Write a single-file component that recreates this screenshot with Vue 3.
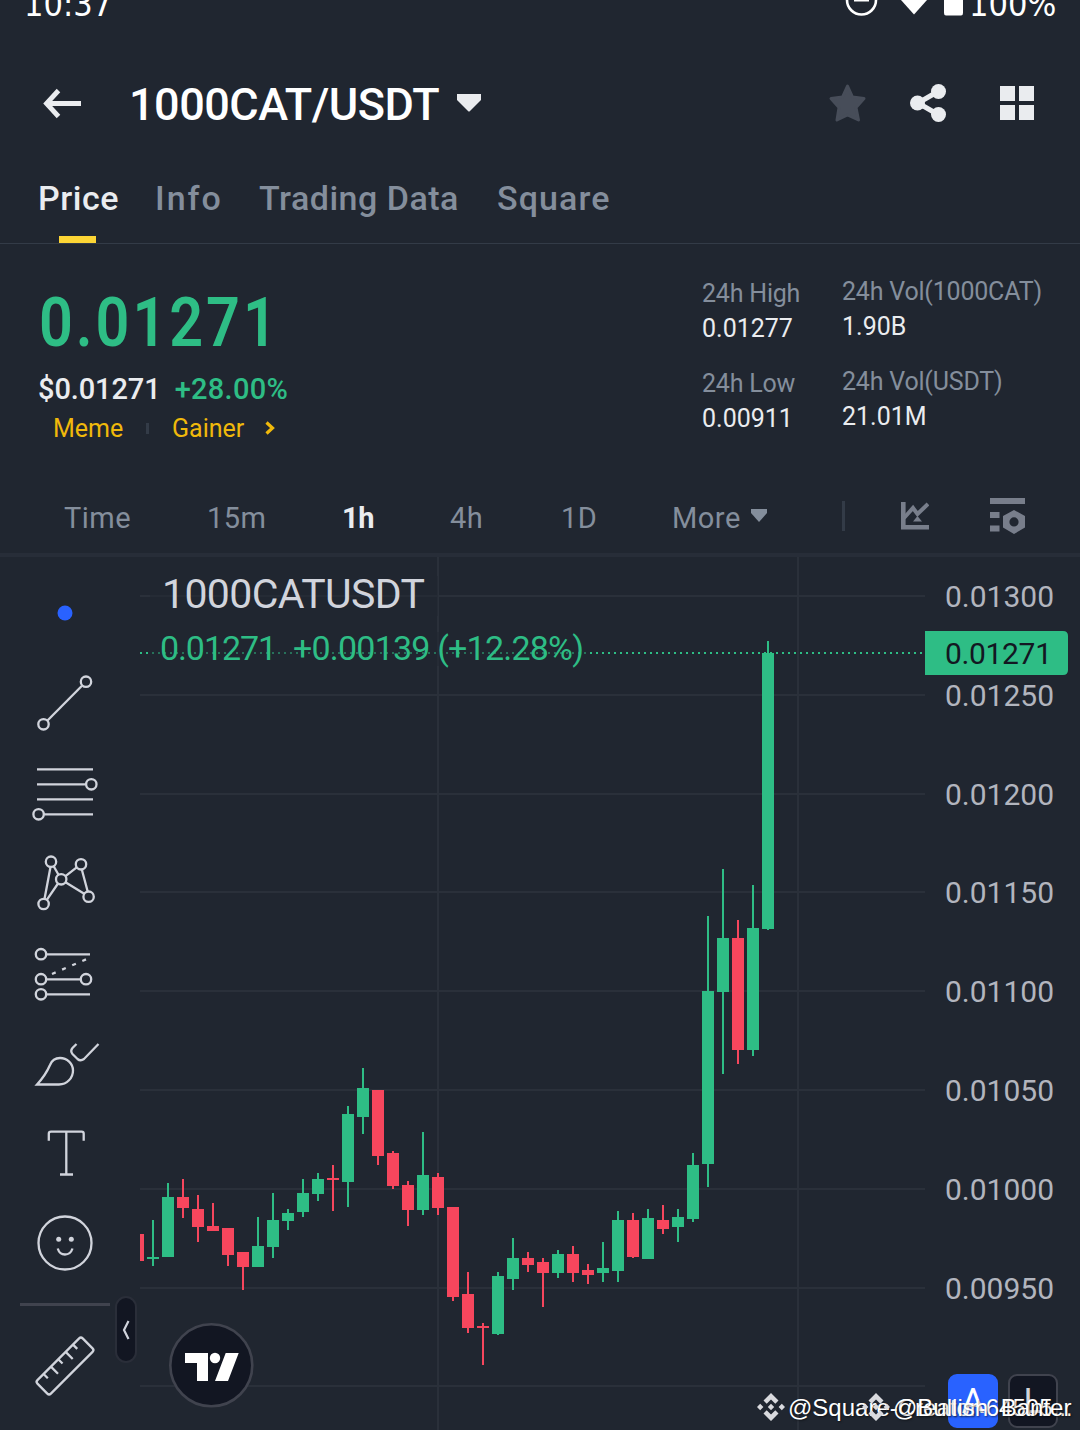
<script setup>
import { ref } from "vue";

const tabs = ['Price', 'Info', 'Trading Data', 'Square'];
const activeTab = ref('Price');

const intervals = ['Time', '15m', '1h', '4h', '1D'];
const activeInterval = ref('1h');

const stats = [
  [
    { label: '24h High', value: '0.01277' },
    { label: '24h Low', value: '0.00911' },
  ],
  [
    { label: '24h Vol(1000CAT)', value: '1.90B' },
    { label: '24h Vol(USDT)', value: '21.01M' },
  ],
];

const levels = [
  { y: 596, label: '0.01300' },
  { y: 695, label: '0.01250' },
  { y: 794, label: '0.01200' },
  { y: 892, label: '0.01150' },
  { y: 991, label: '0.01100' },
  { y: 1090, label: '0.01050' },
  { y: 1189, label: '0.01000' },
  { y: 1288, label: '0.00950' },
  { y: 1386, label: '' },
];

// direction, high, body top, body bottom, low
const rows = [
  ['down', 1234, 1234, 1261, 1261],
  ['up', 1220, 1257, 1259, 1266],
  ['up', 1183, 1197, 1257, 1257],
  ['down', 1179, 1197, 1208, 1218],
  ['down', 1195, 1209, 1227, 1242],
  ['down', 1203, 1226, 1231, 1231],
  ['down', 1228, 1228, 1255, 1266],
  ['down', 1252, 1252, 1267, 1290],
  ['up', 1217, 1246, 1267, 1267],
  ['up', 1193, 1220, 1247, 1258],
  ['up', 1209, 1213, 1221, 1230],
  ['up', 1179, 1193, 1212, 1217],
  ['up', 1173, 1179, 1194, 1201],
  ['down', 1165, 1178, 1180, 1211],
  ['up', 1106, 1114, 1182, 1207],
  ['up', 1068, 1088, 1117, 1134],
  ['down', 1090, 1090, 1156, 1165],
  ['down', 1151, 1153, 1186, 1189],
  ['down', 1181, 1185, 1210, 1226],
  ['up', 1132, 1175, 1210, 1215],
  ['down', 1173, 1177, 1208, 1215],
  ['down', 1207, 1207, 1297, 1301],
  ['down', 1272, 1294, 1328, 1333],
  ['down', 1323, 1326, 1328, 1365],
  ['up', 1272, 1276, 1334, 1335],
  ['up', 1238, 1258, 1279, 1290],
  ['down', 1252, 1258, 1265, 1272],
  ['down', 1258, 1262, 1273, 1307],
  ['up', 1250, 1254, 1273, 1278],
  ['down', 1246, 1254, 1273, 1282],
  ['down', 1264, 1270, 1275, 1284],
  ['up', 1242, 1268, 1273, 1282],
  ['up', 1211, 1220, 1271, 1282],
  ['down', 1213, 1220, 1257, 1258],
  ['up', 1209, 1218, 1259, 1259],
  ['down', 1205, 1220, 1229, 1234],
  ['up', 1209, 1217, 1227, 1242],
  ['up', 1153, 1165, 1219, 1222],
  ['up', 916, 991, 1164, 1187],
  ['up', 869, 938, 992, 1074],
  ['down', 920, 938, 1050, 1064],
  ['up', 885, 928, 1050, 1056],
  ['up', 641, 653, 929, 930],
];

const candles = rows.map(([dir, high, top, bottom, low], i) => ({
  x: 138 + i * 15,
  dir, high, top, bottom, low,
}));
</script>

<template>
<div class="screen">
  <div class="status">
    <span class="clock">10:37</span>
    <svg class="status-icons" width="122" height="18" viewBox="842 0 122 18">
      <circle cx="860.5" cy="0" r="14.5" fill="none" stroke="#fff" stroke-width="2.6" />
      <path d="M853 0H868" stroke="#fff" stroke-width="3" />
      <path d="M900 0H926L913 14.5Z" fill="#fff" />
      <path d="M943 0H962V13Q962 15.500 960 15.500H945Q943 15.500 943 13Z" fill="#fff" />
    </svg>
    <span class="battery">100%</span>
  </div>

  <header class="header">
    <svg class="back" width="48" height="48" viewBox="0 0 48 48">
      <path d="M20.500 10.500L8.500 23.500L20.500 36.500M10 23.500H43" fill="none" stroke="#eaecef" stroke-width="4.800" />
    </svg>
    <h1>1000CAT/USDT</h1>
    <svg class="caret" width="24" height="18" viewBox="0 0 24 18">
      <path d="M0 0H24V6L13 17Q12 18 11 17L0 6Z" fill="#eaecef" />
    </svg>
    <div class="actions">
      <svg width="40" height="40" viewBox="0 0 40 40">
        <path d="M20.500 3L25.500 14L37 15.500L29 24.500L31.500 37L20.500 32L10 37L12 24.500L4 15.500L15.500 14Z" fill="#474d59" stroke="#474d59" stroke-width="3" stroke-linejoin="round" />
      </svg>
      <svg width="40" height="40" viewBox="0 0 40 40">
        <path d="M30 8.500L10 20L30 31.500" fill="none" stroke="#eaecef" stroke-width="5" />
        <circle cx="30.500" cy="8.500" r="7.500" fill="#eaecef" />
        <circle cx="9.500" cy="20" r="7.500" fill="#eaecef" />
        <circle cx="30.500" cy="31.500" r="7.500" fill="#eaecef" />
      </svg>
      <svg width="34" height="34" viewBox="0 0 34 34">
        <path d="M0 0H15V15H0ZM19 0H34V15H19ZM0 19H15V34H0ZM19 19H34V34H19Z" fill="#eaecef" />
      </svg>
    </div>
  </header>

  <nav class="tabs">
    <span
      v-for="tab in tabs"
      :key="tab"
      :class="{ active: tab === activeTab }"
      @click="activeTab = tab">
      {{ tab }}
    </span>
  </nav>

  <section class="summary">
    <div class="quote">
      <div class="price">0.01271</div>
      <div class="change"><span>$0.01271</span><span class="up">+28.00%</span></div>
      <div class="tags">
        <span class="meme">Meme</span>
        <i></i>
        <span class="gainer">Gainer</span>
        <svg width="10" height="14" viewBox="0 0 10 14">
          <path d="M1.500 1.500L7.500 7L1.500 12.500" fill="none" stroke="#f0b90b" stroke-width="3.200" />
        </svg>
      </div>
    </div>
    <div v-for="(col, i) in stats" :key="i" class="stats">
      <div v-for="stat in col" :key="stat.label" class="stat">
        <div class="label">{{ stat.label }}</div>
        <div class="value">{{ stat.value }}</div>
      </div>
    </div>
  </section>

  <div class="intervals">
    <span
      v-for="item in intervals"
      :key="item"
      :class="{ active: item === activeInterval }"
      @click="activeInterval = item">
      {{ item }}
    </span>
    <span class="more">More</span>
    <svg class="more-caret" width="16" height="13" viewBox="0 0 16 13">
      <path d="M0 0H16V4L8 13L0 4Z" fill="#848e9c" />
    </svg>
    <i class="bar"></i>
    <svg class="indicator" width="28" height="28" viewBox="0 0 28 28">
      <path d="M2.300 0V25.300H28" fill="none" stroke="#787e8b" stroke-width="4.600" />
      <path d="M3 16L12 6L16.500 12L27 2" fill="none" stroke="#787e8b" stroke-width="4" />
      <path d="M16.500 14L21 19.500H12Z" fill="#787e8b" />
    </svg>
    <svg class="config" width="35" height="36" viewBox="0 0 35 36">
      <path d="M0 0H35V6H0ZM0 14H9.500V20H0ZM0 27.500H9.500V33.500H0Z" fill="#787e8b" />
      <path fill-rule="evenodd" d="M24 12L35 18V29.500L24 36L13 29.500V18ZM24 19.300A4.600 4.600 0 1 0 24 28.500A4.600 4.600 0 1 0 24 19.300Z" fill="#787e8b" />
    </svg>
  </div>

  <main class="chart">
    <aside class="tools">
      <svg viewBox="0 0 90 90"><circle cx="45" cy="45" r="7.500" class="dot" /></svg>
      <svg viewBox="0 0 90 90">
        <path d="M27.500 62.500L62 27.700" />
        <circle cx="23.500" cy="66.300" r="5.200" /><circle cx="66" cy="23.700" r="5.200" />
      </svg>
      <svg viewBox="0 0 90 90">
        <path d="M17 21.300H73M17 36.300H66M17 51.300H73M24 66.300H73" />
        <circle cx="71.300" cy="36.300" r="5.200" /><circle cx="18.600" cy="66.300" r="5.200" />
      </svg>
      <svg viewBox="0 0 90 90">
        <path d="M30.500 29L24.500 61M33.700 28.200L38.500 36.700M45.500 38.200L56.700 29.300M61.800 31.500L67.700 53.500M45.500 44.200L64.200 55.800M38 45.500L26.800 61.800" />
        <circle cx="31" cy="23.700" r="5.200" /><circle cx="61" cy="26.300" r="5.200" />
        <circle cx="41.200" cy="41.300" r="5.200" /><circle cx="68.600" cy="58.700" r="5.200" />
        <circle cx="23.600" cy="66" r="5.200" />
      </svg>
      <svg viewBox="0 0 90 90">
        <path d="M26 26.300H70M26 51.300H61M26 66.300H70" />
        <path d="M32 46L68 30.500" stroke-dasharray="4 7" />
        <circle cx="21" cy="26.200" r="5.200" /><circle cx="21" cy="51.200" r="5.200" />
        <circle cx="66" cy="51.200" r="5.200" /><circle cx="21" cy="66.300" r="5.200" />
      </svg>
      <svg viewBox="0 0 90 90">
        <path d="M17 66.500C23 60 27 54 30 47C32 42 35 40 40 40C47 40 53 45.500 53 52.500C53 60 47 66.500 39 66.500Z" />
        <path d="M56.500 26L52.500 30Q50 33 52.500 36L57.500 41Q60.500 43.500 64 41L78.500 26" />
      </svg>
      <svg viewBox="0 0 90 90">
        <path d="M28.800 32.700V25.700Q28.800 23.700 31 23.700H61.700Q63.700 23.700 63.700 25.700V32.700M46.300 23.700V66.500M40 66.500H53" />
      </svg>
      <svg viewBox="0 0 90 90">
        <circle cx="45" cy="45" r="26.500" />
        <circle cx="38.700" cy="41.300" r="2.500" class="eye" /><circle cx="51.300" cy="41.300" r="2.500" class="eye" />
        <path d="M37.700 50.500Q39.500 56.500 45 56.500Q50.500 56.500 52.500 50.500" />
      </svg>
      <hr />
      <svg viewBox="0 0 90 90">
        <g transform="translate(45 45) rotate(-45)">
          <rect x="-32" y="-9.500" width="64" height="19" rx="2.500" />
          <path d="M-20.800 -9.500v6M-10.400 -9.500v10M0 -9.500v6M10.400 -9.500v10M20.800 -9.500v6" />
        </g>
      </svg>
    </aside>

    <svg class="plot" width="940" height="873" viewBox="140 557 940 873">
      <g class="grid">
        <path v-for="level in levels" :key="level.y" :d="`M140 ${level.y}H925`" />
        <path d="M438 557V1430M798 557V1430" />
      </g>
      <g v-for="c in candles" :key="c.x" :class="c.dir">
        <rect :x="c.x - 1" :y="c.high" width="2" :height="c.low - c.high" />
        <rect :x="c.x - 6" :y="c.top" width="12" :height="c.bottom - c.top" />
      </g>
      <path class="last-line" d="M140 653H925" />
      <rect class="legend-bg" x="150" y="576" width="288" height="40" />
      <rect class="legend-bg" x="150" y="632" width="436" height="34" />
      <text x="162" y="608" class="symbol" textLength="263">1000CATUSDT</text>
      <text x="160" y="660" class="legend" textLength="117">0.01271</text>
      <text x="293" y="660" class="legend" textLength="291">+0.00139 (+12.28%)</text>
      <text v-for="level in levels" :key="level.label" x="945" :y="level.y + 11" class="axis" textLength="109">{{ level.label }}</text>
      <path d="M925 631H1063Q1068 631 1068 636V670Q1068 675 1063 675H925Z" class="tag" />
      <text x="945" y="664" class="axis tag-text" textLength="107">0.01271</text>
      <!-- TradingView badge -->
      <circle cx="211.300" cy="1365.300" r="41" fill="#121622" stroke="#40434e" stroke-width="2.600" />
      <path d="M185 1353H208V1381H197V1363H185ZM225.700 1353H238.700L228 1381H215Z" fill="#fff" />
      <circle cx="215" cy="1358" r="5.200" fill="#fff" />
    </svg>

    <div class="collapse">
      <svg width="8" height="20" viewBox="0 0 8 20">
        <path d="M6.500 1L2 10L6.500 19" fill="none" stroke="#d1d4dc" stroke-width="2.200" />
      </svg>
    </div>

    <div class="scale">
      <button class="auto">A</button>
      <button>L</button>
    </div>

    <div class="watermark first">
      <svg width="28" height="28" viewBox="0 0 28 28">
        <path d="M14 0L21.500 7.500L18.300 10.700L14 6.400L9.700 10.700L6.500 7.500ZM14 28L6.500 20.500L9.700 17.300L14 21.600L18.300 17.300L21.500 20.500ZM3.200 10.800L6.400 14L3.200 17.200L0 14ZM24.800 10.800L28 14L24.800 17.200L21.600 14ZM14 10.800L17.200 14L14 17.200L10.800 14Z" fill="#d9dade" />
      </svg>
      <span>@Square-Creator-64505...</span>
    </div>
    <div class="watermark second">
      <svg width="28" height="28" viewBox="0 0 28 28">
        <path d="M14 0L21.500 7.500L18.300 10.700L14 6.400L9.700 10.700L6.500 7.500ZM14 28L6.500 20.500L9.700 17.300L14 21.600L18.300 17.300L21.500 20.500ZM3.200 10.800L6.400 14L3.200 17.200L0 14ZM24.800 10.800L28 14L24.800 17.200L21.600 14ZM14 10.800L17.200 14L14 17.200L10.800 14Z" fill="#d9dade" />
      </svg>
      <span>@Bullish Banter</span>
    </div>
  </main>
</div>
</template>

<style>
body {
  background-color: #202630;
}
</style>

<style scoped>
.screen {
  width: 1080px;
  height: 1430px;
  overflow: hidden;
  background-color: #202630;
  font-family: Roboto, "Noto Sans", sans-serif;
  color: #eaecef;
  white-space: nowrap;
}

svg {
  display: block;
  flex: none;
}

.status {
  height: 60px;
  display: flex;
  align-items: flex-start;
  padding: 0 20px 0 24px;
  color: #fff;
  font-family: "DejaVu Sans Condensed", "DejaVu Sans", sans-serif;
  font-stretch: condensed;
  font-size: 34px;
  line-height: 40px;
}

.clock, .battery {
  margin-top: -16px;
}

.battery {
  width: 91px;
  margin-left: 4px;
}

.status-icons {
  margin-left: auto;
}

.header {
  height: 90px;
  display: flex;
  align-items: center;
  padding: 0 46px 0 38px;
}

.back {
  margin-top: -2px;
}

h1 {
  margin: 0 0 0 43px;
  width: 310px;
  font-size: 45px;
  font-weight: 500;
  line-height: 60px;
  letter-spacing: -.5px;
  color: #fff;
}

.caret {
  margin: -4px 0 0 18px;
}

.actions {
  margin-left: auto;
  margin-top: -5px;
  display: flex;
  align-items: center;
}

.actions svg:nth-child(2) {
  margin: 0 52px 0 41px;
}

.tabs {
  height: 94px;
  box-sizing: border-box;
  padding: 18px 0 0 38px;
  display: grid;
  grid-template-columns: 80px 67px 201px 113px;
  column-gap: 37px;
  border-bottom: 1px solid #333b47;
  font-size: 34px;
  font-weight: 500;
  line-height: 60px;
  letter-spacing: .5px;
  color: #848e9c;
}

.tabs span:nth-child(2) {
  letter-spacing: 2px;
}

.tabs span:nth-child(4) {
  letter-spacing: 1.1px;
}

.tabs .active {
  color: #eaecef;
}

.tabs .active::after {
  content: "";
  display: block;
  width: 37px;
  height: 7px;
  margin: 8px 0 0 21px;
  background-color: #fcd535;
}

.summary {
  height: 239px;
  box-sizing: border-box;
  padding: 39px 0 0 38px;
  display: flex;
}

.quote {
  width: 664px;
}

/* tall narrow digits */
.price {
  margin-left: 1px;
  font-size: 69px;
  font-weight: 600;
  line-height: 80px;
  letter-spacing: 3.4px;
  transform: scaleX(.86);
  transform-origin: left;
  color: #2ebd85;
}

.change {
  margin-top: 6px;
  display: flex;
  gap: 14px;
  font-size: 29px;
  font-weight: 500;
  line-height: 40px;
}

.change span {
  letter-spacing: -.1px;
}

.change .up {
  letter-spacing: .3px;
}

.up {
  color: #2ebd85;
}

.tags {
  display: flex;
  align-items: center;
  margin-left: 15px;
  font-size: 25px;
  line-height: 40px;
  color: #f0b90b;
}

.meme {
  width: 93px;
}

.tags i {
  width: 3px;
  height: 11px;
  background-color: #333b47;
}

.gainer {
  margin-left: 23px;
  width: 93px;
}

.tags i, .tags svg {
  margin-top: -2px;
}

.stats {
  width: 140px;
  margin-top: -7px;
  font-size: 25px;
  line-height: 35px;
}

.stats:last-child {
  margin-top: -9px;
}

.stat {
  margin-bottom: 20px;
}

.label {
  color: #848e9c;
  letter-spacing: -.2px;
}

.value {
  color: #eaecef;
}

.intervals {
  height: 74px;
  box-sizing: border-box;
  border-bottom: 4px solid #272d38;
  padding-left: 64px;
  display: grid;
  grid-template-columns: 143px 135px 108px 111px 111px 79px 91px 58px 89px 40px;
  align-items: center;
  font-size: 29px;
  letter-spacing: .5px;
  color: #848e9c;
}

.intervals .active {
  font-weight: 700;
  letter-spacing: -.5px;
  color: #eaecef;
}

.more-caret {
  margin-top: -5px;
}

.bar {
  width: 3px;
  height: 30px;
  margin-top: -4px;
  background-color: #333b47;
}

.indicator {
  margin: -5px 0 0 1px;
}

.config {
  margin: -4px 0 0 1px;
}

.chart {
  position: relative;
  height: 873px;
  display: flex;
}

.tools {
  width: 140px;
  padding-top: 11px;
}

.tools svg {
  width: 90px;
  height: 90px;
  margin-left: 20px;
  fill: none;
  stroke: #d1d4dc;
  stroke-width: 2.300;
}

.tools .dot {
  fill: #2962ff;
  stroke: none;
}

.tools .eye {
  fill: #d1d4dc;
  stroke: none;
}

.tools hr {
  width: 90px;
  height: 3px;
  border: 0;
  margin: 15px 0 15px 20px;
  background-color: #40434e;
}

.grid path {
  stroke: #2a303a;
  stroke-width: 2;
}

.up rect, .tag {
  fill: #2ebd85;
}

.down rect {
  fill: #f6465d;
}

.last-line {
  stroke: #2ebd85;
  stroke-width: 2;
  stroke-dasharray: 2 4;
}

.legend-bg {
  fill: #202630;
  opacity: .5;
}

.symbol {
  font-size: 41px;
  fill: #d1d4dc;
}

.legend {
  font-size: 34px;
  fill: #2ebd85;
}

.axis {
  font-size: 30px;
  fill: #b2b5be;
}

.tag-text {
  fill: #131722;
}

.collapse {
  position: absolute;
  left: 115px;
  top: 739px;
  width: 22px;
  height: 67px;
  box-sizing: border-box;
  border: 2px solid #2a2e39;
  border-radius: 11px;
  background-color: #121622;
  display: grid;
  place-content: center;
}

.scale {
  position: absolute;
  left: 948px;
  top: 817px;
  display: flex;
  gap: 10px;
}

.scale button {
  width: 50px;
  height: 54px;
  padding: 0;
  border: 2px solid #40434e;
  border-radius: 9px;
  background-color: #121622;
  color: #d1d4dc;
  font-family: Roboto, sans-serif;
  font-size: 35px;
}

.scale .auto {
  border-color: #2962ff;
  background-color: #2962ff;
  color: #fff;
}

.watermark {
  position: absolute;
  top: 835px;
  display: flex;
  align-items: center;
  gap: 3px;
  font-family: "Liberation Sans", Arial, sans-serif;
  font-size: 24px;
  line-height: 28px;
  color: #fff;
  text-shadow: 1px 1px 2px rgba(0, 0, 0, .5);
}

.watermark span {
  padding-top: 2px;
}

.first {
  left: 757px;
}

.second {
  left: 862px;
  word-spacing: 6px;
}
</style>
